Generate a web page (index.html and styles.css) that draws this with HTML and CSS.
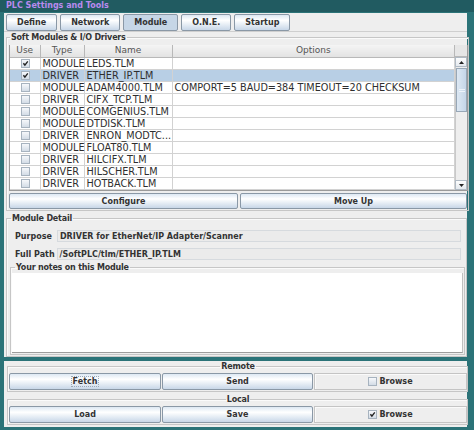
FILE: index.html
```html
<!DOCTYPE html>
<html lang="en">
<head>
<meta charset="UTF-8">
<title>PLC Settings and Tools</title>
<link rel="stylesheet" href="styles.css">
</head>
<body>

<div class="window">
  <div class="titlebar">PLC Settings and Tools</div>

  <div class="frame">
    <div class="tabs">
      <button class="btn tab">Define</button>
      <button class="btn tab">Network</button>
      <button class="btn tab active">Module</button>
      <button class="btn tab">O.N.E.</button>
      <button class="btn tab">Startup</button>
    </div>

    <div class="main">
      <fieldset class="group modules">
        <legend>Soft Modules &amp; I/O Drivers</legend>
        <div class="grid-wrap">
          <div class="grid-view">
            <table class="grid">
              <colgroup>
                <col class="c-use"><col class="c-type"><col class="c-name"><col class="c-opts">
              </colgroup>
              <thead>
                <tr><th>Use</th><th>Type</th><th>Name</th><th>Options</th></tr>
              </thead>
              <tbody>
                <tr><td class="use"><span class="chk on"><svg viewBox="0 0 8 8"><path d="M1.6 3.8 L3.3 5.8 L6.6 1.6"/></svg></span></td><td>MODULE</td><td>LEDS.TLM</td><td></td></tr>
                <tr class="sel"><td class="use"><span class="chk on"><svg viewBox="0 0 8 8"><path d="M1.6 3.8 L3.3 5.8 L6.6 1.6"/></svg></span></td><td>DRIVER</td><td>ETHER_IP.TLM</td><td></td></tr>
                <tr><td class="use"><span class="chk"></span></td><td>MODULE</td><td>ADAM4000.TLM</td><td>COMPORT=5 BAUD=384 TIMEOUT=20 CHECKSUM</td></tr>
                <tr><td class="use"><span class="chk"></span></td><td>DRIVER</td><td>CIFX_TCP.TLM</td><td></td></tr>
                <tr><td class="use"><span class="chk"></span></td><td>MODULE</td><td>COMGENIUS.TLM</td><td></td></tr>
                <tr><td class="use"><span class="chk"></span></td><td>MODULE</td><td>DTDISK.TLM</td><td></td></tr>
                <tr><td class="use"><span class="chk"></span></td><td>DRIVER</td><td>ENRON_MODTC...</td><td></td></tr>
                <tr><td class="use"><span class="chk"></span></td><td>MODULE</td><td>FLOAT80.TLM</td><td></td></tr>
                <tr><td class="use"><span class="chk"></span></td><td>DRIVER</td><td>HILCIFX.TLM</td><td></td></tr>
                <tr><td class="use"><span class="chk"></span></td><td>DRIVER</td><td>HILSCHER.TLM</td><td></td></tr>
                <tr><td class="use"><span class="chk"></span></td><td>DRIVER</td><td>HOTBACK.TLM</td><td></td></tr>
                <tr><td class="use"><span class="chk"></span></td><td>MODULE</td><td>IOSTAT300.TLM</td><td>COMPORT=2 BAUD=192 TIMEOUT=40</td></tr>
              </tbody>
            </table>
          </div>
          <div class="vscroll">
            <div class="corner"></div>
            <div class="arrow up"><svg viewBox="0 0 7 4"><path d="M0 4 L3.5 0 L7 4 Z"/></svg></div>
            <div class="track">
              <div class="thumb"><span class="grip"></span></div>
            </div>
            <div class="arrow down"><svg viewBox="0 0 7 4"><path d="M0 0 L3.5 4 L7 0 Z"/></svg></div>
          </div>
        </div>
        <div class="btn-row two">
          <button class="btn">Configure</button>
          <button class="btn">Move Up</button>
        </div>
      </fieldset>

      <fieldset class="group detail">
        <legend>Module Detail</legend>
        <div class="field-row">
          <span class="field-label">Purpose</span>
          <span class="field">DRIVER for EtherNet/IP Adapter/Scanner</span>
        </div>
        <div class="field-row">
          <span class="field-label">Full Path</span>
          <span class="field path">/SoftPLC/tlm/ETHER_IP.TLM</span>
        </div>
        <fieldset class="group notes">
          <legend>Your notes on this Module</legend>
          <div class="notes-area"></div>
        </fieldset>
      </fieldset>
    </div>

    <div class="bottom">
      <fieldset class="group centered">
        <legend>Remote</legend>
        <div class="btn-row three">
          <button class="btn focus"><span>Fetch</span></button>
          <button class="btn">Send</button>
          <label class="toggle"><span class="chk"></span>Browse</label>
        </div>
      </fieldset>
      <fieldset class="group centered">
        <legend>Local</legend>
        <div class="btn-row three">
          <button class="btn">Load</button>
          <button class="btn">Save</button>
          <label class="toggle"><span class="chk on"><svg viewBox="0 0 8 8"><path d="M1.6 3.8 L3.3 5.8 L6.6 1.6"/></svg></span>Browse</label>
        </div>
      </fieldset>
    </div>
  </div>
</div>

</body>
</html>
```

FILE: styles.css
```css
* {
  box-sizing: border-box;
  padding: 0;
  margin: 0;
}

html, body {
  height: 100%;
  width: 100%;
  overflow: hidden;
}

body {
  background: #2b7378;
  font: 9.7px/11px "DejaVu Sans", sans-serif;
  color: #333;
}

.titlebar {
  height: 12px;
  line-height: 12px;
  padding-left: 6px;
  background: #215b61;
  color: #b98aef;
  font-size: 8px;
  font-weight: bold;
}

.frame {
  padding: 1px 7px 3px 4px;
}

/* tab strip */
.tabs {
  height: 19px;
  display: flex;
  gap: 3px;
  padding: 1px 0 0 2px;
  background: #eeeeee;
  border-bottom: 1px solid #cfcfcf;
}

.btn {
  font: bold 8px/11px "DejaVu Sans", sans-serif;
  color: #333;
  height: 16px;
  border: 1px solid #8a98a6;
  border-radius: 2px;
  background: linear-gradient(#dde8f3 0%, #ffffff 35%, #eef3f8 55%, #c8d7e8 100%);
  padding: 0;
}

.tab {
  height: 17px;
  padding: 0 10px;
}

.tab.active {
  background: #c6d6e6;
}

/* main area */
.main {
  height: 325px;
  background: #eeeeee;
  padding: 0 0 0 2px;
  display: flex;
  flex-direction: column;
}

.group {
  border: 1px solid #c6c6c6;
  box-shadow: inset 1px 1px 0 #fafafa;
}

.group legend {
  font-size: 8px;
  font-weight: bold;
  letter-spacing: -0.2px;
  color: #333;
  padding: 0 1px;
  margin-left: 1px;
  line-height: 11px;
}

.modules {
  padding: 2px 0 1px 2px;
}

.grid-wrap {
  height: 146px;
  display: flex;
  border: 1px solid #9a9a9a;
  border-top: 0;
  background: #eeeeee;
}

.grid-view {
  width: 445px;
  overflow: hidden;
  background: #fff;
}

.grid {
  width: 445px;
  table-layout: fixed;
  border-collapse: collapse;
}

.c-use { width: 30px; }
.c-type { width: 44px; }
.c-name { width: 88px; }

.grid th {
  height: 12px;
  font-weight: normal;
  font-size: 9px;
  color: #555;
  text-align: center;
  background: linear-gradient(#f4f4f4, #e2e2e2);
  border: 1px solid #b8b8b8;
  border-top: 0;
}

.grid td {
  height: 12px;
  padding: 0 1px 0 2px;
  white-space: nowrap;
  color: #2e2e2e;
  border: 1px solid #d2d2d2;
  border-top: 0;
}

.grid td:first-child, .grid th:first-child {
  border-left: 0;
}

.grid tr.sel td {
  background: #b8cfe5;
}

.grid td.use {
  text-align: center;
  padding: 0 0 0 2px;
}

.chk {
  display: inline-block;
  width: 9px;
  height: 9px;
  vertical-align: -1px;
  border: 1px solid #a7b3bf;
  background: linear-gradient(#f6f8fb, #d3dce6);
}

.chk svg {
  display: block;
  width: 7px;
  height: 7px;
  fill: none;
  stroke: #222;
  stroke-width: 1.6;
}

/* scrollbar */
.vscroll {
  width: 12px;
  display: flex;
  flex-direction: column;
}

.corner {
  height: 12px;
  background: #e6e6e6;
  border-bottom: 1px solid #b8b8b8;
}

.arrow {
  height: 10px;
  display: flex;
  align-items: center;
  justify-content: center;
  background: linear-gradient(#fdfdfd, #e4e9ee);
  border: 1px solid #b0bac4;
}

.arrow svg {
  width: 5px;
  height: 3px;
  fill: #222;
}

.track {
  flex: 1;
  background: #eeeeee;
  border-left: 1px solid #c9c9c9;
}

.thumb {
  height: 44px;
  margin-top: 1px;
  display: flex;
  align-items: center;
  justify-content: center;
  background: linear-gradient(to right, #dde8f3, #c5d6e8);
  border: 1px solid #97a7b7;
}

.grip {
  width: 6px;
  height: 3px;
  border-top: 1px solid #eef4fa;
  border-bottom: 1px solid #eef4fa;
}

.btn-row {
  display: grid;
  margin-top: 2px;
}

.btn-row.two {
  grid-template-columns: 229px 227px;
  gap: 2px;
}

/* module detail */
.detail {
  flex: 1;
  margin-top: 2px;
  padding: 6px 1px 1px 3px;
  display: flex;
  flex-direction: column;
}

.field-row {
  display: flex;
  align-items: center;
  gap: 5px;
  padding: 0 4px 0 5px;
  margin-bottom: 6px;
  font-size: 8px;
  font-weight: bold;
}

.field {
  flex: 1;
  height: 12px;
  padding-left: 2px;
  background: #ebebeb;
  border: 1px solid #d6dade;
  color: #333;
}

.field.path {
  margin-left: -3px;
}

.notes {
  flex: 1;
  margin-top: -4px;
  padding: 0 1px 1px 1px;
  display: flex;
  flex-direction: column;
}

.notes legend {
  margin-left: 3px;
}

.notes-area {
  flex: 1;
  background: #fff;
  border-bottom: 1px solid #9c9c9c;
  border-right: 1px solid #c0c0c0;
}

/* remote / local */
.bottom {
  height: 66px;
  margin-top: 4px;
  background: #eeeeee;
  padding: 0 1px 2px 3px;
}

.centered {
  padding: 1px 0 1px 1px;
}

.centered + .centered {
  margin-top: 2px;
}

.centered legend {
  margin: 0 auto;
}

.btn-row.three {
  margin-top: 0;
  grid-template-columns: 152px 151px 153px;
  gap: 1px;
}

.btn-row.three .btn {
  height: 17px;
}

.btn.focus span {
  outline: 1px dotted #9aa8b8;
  padding: 0 1px;
}

.toggle {
  display: flex;
  align-items: center;
  justify-content: center;
  gap: 2px;
  font-size: 8px;
  font-weight: bold;
  border: 1px solid #c4c4c4;
  box-shadow: inset 1px 1px 0 #fafafa;
}
```
